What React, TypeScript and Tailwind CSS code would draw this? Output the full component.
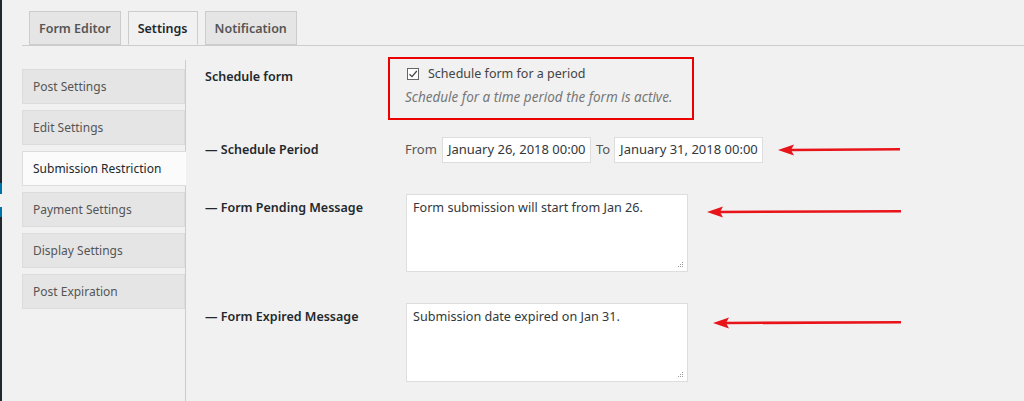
import React from "react";

const font = { fontFamily: '"Noto Sans", "Open Sans", Arial, sans-serif' };

function Arrow({ width }: { width: number }) {
  return (
    <svg width={width} height="14" viewBox={`0 0 ${width} 14`} className="block">
      <polygon points={`0,7 16,1.5 13,7 16,12.5`} fill="#e8141a" />
      <path d={`M12 7 L${width} 6.2`} stroke="#e8141a" strokeWidth="2.6" strokeLinecap="round" fill="none" />
    </svg>
  );
}

function Tab({ label, active }: { label: string; active?: boolean }) {
  return (
    <div
      className={
        "h-[34px] px-[9px] pt-[3px] flex items-center border border-[#ccc] text-[12.5px] font-semibold -mb-px " +
        (active
          ? "bg-[#f1f1f1] border-b-[#f1f1f1] text-[#23282d]"
          : "bg-[#e5e5e5] text-[#555]")
      }
    >
      {label}
    </div>
  );
}

function SideItem({ label, active }: { label: string; active?: boolean }) {
  return (
    <div
      className={
        "h-[35px] flex items-center pl-[10px] pt-[1px] border border-[#dcdcdc] text-[12px] " +
        (active
          ? "bg-[#fbfbfb] text-[#23282d] border-r-0 -mr-px"
          : "bg-[#e5e5e5] text-[#555]")
      }
    >
      {label}
    </div>
  );
}

function Grip() {
  return (
    <svg className="absolute right-[3px] bottom-[3px]" width="6" height="6" viewBox="0 0 6 6">
      <rect x="4" y="0" width="1" height="1" fill="#999" />
      <rect x="2" y="2" width="1" height="1" fill="#999" />
      <rect x="4" y="2" width="1" height="1" fill="#999" />
      <rect x="0" y="4" width="1" height="1" fill="#999" />
      <rect x="2" y="4" width="1" height="1" fill="#999" />
      <rect x="4" y="4" width="1" height="1" fill="#999" />
    </svg>
  );
}

export default function App() {
  return (
    <div className="w-[1024px] h-[401px] bg-[#f1f1f1] flex overflow-hidden" style={font}>
      <div className="w-[2px] h-full flex flex-col">
        <div className="h-[183px] bg-[#23282d]" />
        <div className="h-[11px] bg-[#0073aa]" />
        <div className="h-[13px] bg-[#f1f1f1]" />
        <div className="h-[10px] bg-[#0073aa]" />
        <div className="flex-1 bg-[#23282d]" />
      </div>
      <div className="flex-1 pl-[20px] pt-[11px]">
        <div className="flex gap-[7px] pl-[7px] border-b border-[#ccc] h-[35px]">
          <Tab label="Form Editor" />
          <Tab label="Settings" active />
          <Tab label="Notification" />
        </div>
        <div className="flex">
          <div className="w-[164px] mt-[14px] border-r border-[#ccc] h-[360px] pt-[9px] flex flex-col gap-[6px]">
            <SideItem label="Post Settings" />
            <SideItem label="Edit Settings" />
            <SideItem label="Submission Restriction" active />
            <SideItem label="Payment Settings" />
            <SideItem label="Display Settings" />
            <SideItem label="Post Expiration" />
          </div>
          <div className="pl-[19px] pt-[11px] flex flex-col">
            <div className="flex">
              <div className="w-[183px] pt-[10px] text-[12.5px] font-semibold text-[#23282d] leading-[20px]">
                Schedule form
              </div>
              <div className="w-[306px] h-[63px] border-2 border-[#ec0000] pl-[15px] pt-[5px]">
                <div className="flex items-center h-[20px] text-[12.5px] text-[#444]">
                  <span className="w-[12px] h-[12px] ml-[2px] border border-[#666] bg-white flex items-center justify-center">
                    <svg width="10" height="10" viewBox="0 0 10 10">
                      <path d="M1.5 5.2 L4 7.6 L8.8 2" stroke="#444" strokeWidth="1.3" fill="none" />
                    </svg>
                  </span>
                  <span className="ml-[9px]">Schedule form for a period</span>
                </div>
                <div className="mt-[3px] h-[20px] leading-[20px] text-[13.5px] italic text-[#777]">
                  Schedule for a time period the form is active.
                </div>
              </div>
            </div>

            <div className="flex items-center mt-[17px]">
              <div className="w-[200px] text-[12.5px] font-semibold text-[#23282d]">— Schedule Period</div>
              <span className="text-[13px] text-[#555]">From</span>
              <div className="ml-[5px] w-[149px] h-[26px] bg-white border border-[#ddd] flex items-center pl-[5px] text-[13px] text-[#32373c]">
                January 26, 2018 00:00
              </div>
              <span className="ml-[5px] text-[13px] text-[#555]">To</span>
              <div className="ml-[4px] w-[149px] h-[26px] bg-white border border-[#ddd] flex items-center pl-[5px] text-[13px] text-[#32373c]">
                January 31, 2018 00:00
              </div>
              <div className="ml-[15px]">
                <Arrow width={122} />
              </div>
            </div>

            <div className="flex items-start mt-[31px]">
              <div className="w-[201px] pt-[4px] text-[12.5px] font-semibold text-[#23282d] leading-[20px]">
                — Form Pending Message
              </div>
              <div className="relative w-[282px] h-[78px] bg-white border border-[#ddd] px-[6px] pt-[3px] text-[12.6px] text-[#32373c] leading-[20px]">
                Form submission will start from Jan 26.
                <Grip />
              </div>
              <div className="ml-[19px] mt-[11px]">
                <Arrow width={194} />
              </div>
            </div>

            <div className="flex items-start mt-[31px]">
              <div className="w-[201px] pt-[4px] text-[12.5px] font-semibold text-[#23282d] leading-[20px]">
                — Form Expired Message
              </div>
              <div className="relative w-[282px] h-[79px] bg-white border border-[#ddd] px-[6px] pt-[3px] text-[12.6px] text-[#32373c] leading-[20px]">
                Submission date expired on Jan 31.
                <Grip />
              </div>
              <div className="ml-[25px] mt-[13px]">
                <Arrow width={188} />
              </div>
            </div>
          </div>
        </div>
      </div>
    </div>
  );
}
